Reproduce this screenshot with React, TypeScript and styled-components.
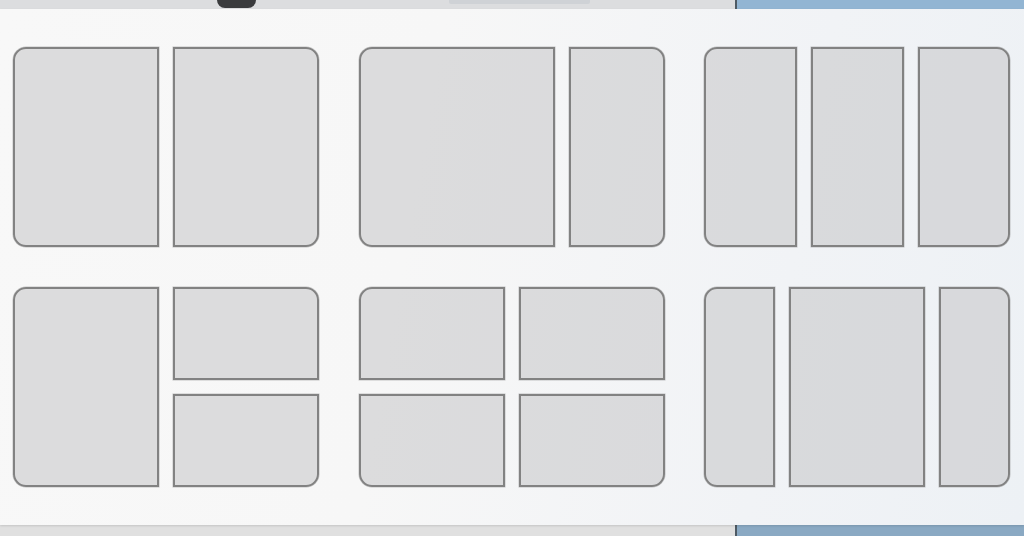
import styled, { createGlobalStyle } from 'styled-components';

type Tile = { col: string; row: string; radius: string };
type Layout = { id: number; cols: string; rows: string; tiles: Tile[] };

const R = '13px';

const layouts: Layout[] = [
    {
        id: 1, cols: '1fr 1fr', rows: '1fr',
        tiles: [
            { col: '1', row: '1', radius: `${R} 0 0 ${R}` },
            { col: '2', row: '1', radius: `0 ${R} ${R} 0` },
        ],
    },
    {
        id: 2, cols: '196px 1fr', rows: '1fr',
        tiles: [
            { col: '1', row: '1', radius: `${R} 0 0 ${R}` },
            { col: '2', row: '1', radius: `0 ${R} ${R} 0` },
        ],
    },
    {
        id: 3, cols: '93px 93px 1fr', rows: '1fr',
        tiles: [
            { col: '1', row: '1', radius: `${R} 0 0 ${R}` },
            { col: '2', row: '1', radius: '0' },
            { col: '3', row: '1', radius: `0 ${R} ${R} 0` },
        ],
    },
    {
        id: 4, cols: '1fr 1fr', rows: '1fr 1fr',
        tiles: [
            { col: '1', row: '1 / span 2', radius: `${R} 0 0 ${R}` },
            { col: '2', row: '1', radius: `0 ${R} 0 0` },
            { col: '2', row: '2', radius: `0 0 ${R} 0` },
        ],
    },
    {
        id: 5, cols: '1fr 1fr', rows: '1fr 1fr',
        tiles: [
            { col: '1', row: '1', radius: `${R} 0 0 0` },
            { col: '2', row: '1', radius: `0 ${R} 0 0` },
            { col: '1', row: '2', radius: `0 0 0 ${R}` },
            { col: '2', row: '2', radius: `0 0 ${R} 0` },
        ],
    },
    {
        id: 6, cols: '71px 136px 1fr', rows: '1fr',
        tiles: [
            { col: '1', row: '1', radius: `${R} 0 0 ${R}` },
            { col: '2', row: '1', radius: '0' },
            { col: '3', row: '1', radius: `0 ${R} ${R} 0` },
        ],
    },
];

export default function App() {
    return (
        <>
            <GlobalStyle />
            <Screen>
                <TopStrip>
                    <span />
                    <CameraPill />
                    <span />
                    <TabBar />
                    <span />
                    <BlueWindow />
                </TopStrip>
                <Flyout>
                    {layouts.map(layout => (
                        <LayoutGroup key={layout.id} $cols={layout.cols} $rows={layout.rows}>
                            {layout.tiles.map((t, i) => (
                                <Zone key={i} $col={t.col} $row={t.row} $radius={t.radius} />
                            ))}
                        </LayoutGroup>
                    ))}
                </Flyout>
                <BottomStrip>
                    <GreyWindow />
                    <BlueWindowBottom />
                </BottomStrip>
            </Screen>
        </>
    );
}

const GlobalStyle = createGlobalStyle`
    html, body {
        margin: 0;
        padding: 0;
        width: 1024px;
        height: 536px;
        overflow: hidden;
        font-family: "Segoe UI", "Noto Sans", sans-serif;
    }
`;

const Screen = styled.div`
    width: 1024px;
    height: 536px;
    display: flex;
    flex-direction: column;
    background: #e1e1e1;
`;

const TopStrip = styled.div`
    height: 9px;
    flex-shrink: 0;
    display: grid;
    grid-template-columns: 217px 39px 193px 141px 145px 1fr;
    background: #dcdddf;
`;

const CameraPill = styled.div`
    background: #3a3b3d;
    border-radius: 0 0 16px 16px;
    height: 8px;
`;

const TabBar = styled.div`
    background: #cfd2d6;
    height: 4px;
    border-radius: 0 0 2px 2px;
`;

const BlueWindow = styled.div`
    background: #92b5d3;
    border-left: 2px solid #4e5a64;
`;

const Flyout = styled.div`
    flex: 1;
    display: grid;
    grid-template-columns: repeat(3, 306px);
    grid-template-rows: repeat(2, 200px);
    column-gap: 39.5px;
    row-gap: 40px;
    padding: 38px 14px 38px 13px;
    background: linear-gradient(100deg, #f8f8f8 0%, #f7f7f7 40%, #f1f3f6 75%, #edf1f5 100%);
    box-shadow: 0 1px 2px rgba(0, 0, 0, 0.12);
    position: relative;
    z-index: 1;
`;

const LayoutGroup = styled.div<{ $cols: string; $rows: string }>`
    display: grid;
    grid-template-columns: ${p => p.$cols};
    grid-template-rows: ${p => p.$rows};
    gap: 14px;
`;

const Zone = styled.div<{ $col: string; $row: string; $radius: string }>`
    grid-column: ${p => p.$col};
    grid-row: ${p => p.$row};
    border-radius: ${p => p.$radius};
    border: 2px solid #828282;
    box-shadow: 0 0 0 0.5px rgba(130, 130, 130, 0.45);
    background: rgba(198, 198, 200, 0.56);
`;

const BottomStrip = styled.div`
    height: 11px;
    flex-shrink: 0;
    display: grid;
    grid-template-columns: 735px 1fr;
`;

const GreyWindow = styled.div`
    background: #e0e0e0;
`;

const BlueWindowBottom = styled.div`
    background: #8aa9c3;
    border-left: 2px solid #4e5a64;
`;
